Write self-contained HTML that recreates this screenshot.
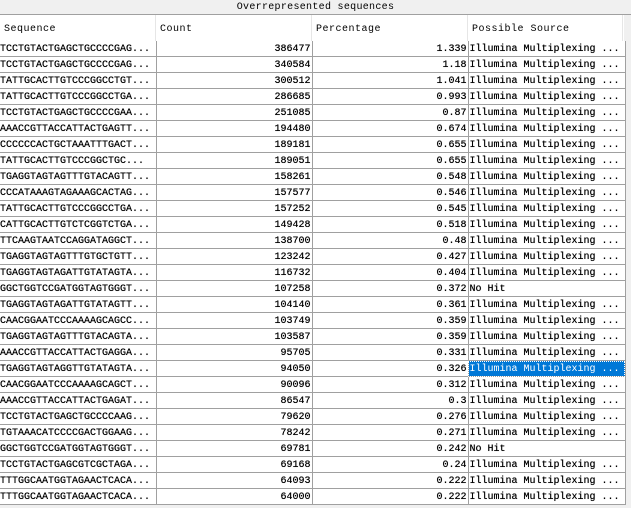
<!DOCTYPE html><html><head><style>
body{margin:0;width:631px;height:508px;background:#f0f0f0;overflow:hidden;font-family:"Liberation Mono","Noto Sans CJK SC",monospace;font-size:10px;color:#000;position:relative}
.t{position:absolute;top:1px;left:0;width:631px;height:14px;text-align:center;line-height:14px;letter-spacing:0.3px}
.tl{position:absolute;top:14px;left:0;width:631px;height:1px;background:#a0a0a0}
.hd{position:absolute;top:15px;left:0;width:624px;height:26px;background:#fff}
.hc{position:absolute;top:15px;height:26px;line-height:30px;padding-left:4px;box-sizing:border-box;border-right:1px solid #e6e6e6;letter-spacing:0.5px}
table{position:absolute;top:41px;left:0;border-collapse:collapse;background:#fff;table-layout:fixed;width:625px}
td{height:13px;padding:2px 1px 0 0;border-right:1px solid #a0a0a0;border-bottom:1px solid #a0a0a0;line-height:13px;white-space:nowrap;overflow:hidden;text-shadow:0 0 0.4px #000}
td.r{text-align:right}
td.s{padding-left:1px}
tr.sel td.p{background:#0078d7;color:#fff;outline:1px dotted #fff;outline-offset:-1px;text-shadow:none}
</style></head><body>
<div class="t">Overrepresented sequences</div><div class="tl"></div>
<div class="hd"></div>
<div class="hc" style="left:0;width:156px">Sequence</div>
<div class="hc" style="left:156px;width:156px">Count</div>
<div class="hc" style="left:312px;width:156px">Percentage</div>
<div class="hc" style="left:468px;width:155px">Possible Source</div>
<table>
<colgroup><col style="width:156px"><col style="width:156px"><col style="width:156px"><col style="width:157px"></colgroup>
<tr><td>TCCTGTACTGAGCTGCCCCGAG...</td><td class="r">386477</td><td class="r">1.339</td><td class="s">Illumina Multiplexing ...</td></tr>
<tr><td>TCCTGTACTGAGCTGCCCCGAG...</td><td class="r">340584</td><td class="r">1.18</td><td class="s">Illumina Multiplexing ...</td></tr>
<tr><td>TATTGCACTTGTCCCGGCCTGT...</td><td class="r">300512</td><td class="r">1.041</td><td class="s">Illumina Multiplexing ...</td></tr>
<tr><td>TATTGCACTTGTCCCGGCCTGA...</td><td class="r">286685</td><td class="r">0.993</td><td class="s">Illumina Multiplexing ...</td></tr>
<tr><td>TCCTGTACTGAGCTGCCCCGAA...</td><td class="r">251085</td><td class="r">0.87</td><td class="s">Illumina Multiplexing ...</td></tr>
<tr><td>AAACCGTTACCATTACTGAGTT...</td><td class="r">194480</td><td class="r">0.674</td><td class="s">Illumina Multiplexing ...</td></tr>
<tr><td>CCCCCCACTGCTAAATTTGACT...</td><td class="r">189181</td><td class="r">0.655</td><td class="s">Illumina Multiplexing ...</td></tr>
<tr><td>TATTGCACTTGTCCCGGCTGC...</td><td class="r">189051</td><td class="r">0.655</td><td class="s">Illumina Multiplexing ...</td></tr>
<tr><td>TGAGGTAGTAGTTTGTACAGTT...</td><td class="r">158261</td><td class="r">0.548</td><td class="s">Illumina Multiplexing ...</td></tr>
<tr><td>CCCATAAAGTAGAAAGCACTAG...</td><td class="r">157577</td><td class="r">0.546</td><td class="s">Illumina Multiplexing ...</td></tr>
<tr><td>TATTGCACTTGTCCCGGCCTGA...</td><td class="r">157252</td><td class="r">0.545</td><td class="s">Illumina Multiplexing ...</td></tr>
<tr><td>CATTGCACTTGTCTCGGTCTGA...</td><td class="r">149428</td><td class="r">0.518</td><td class="s">Illumina Multiplexing ...</td></tr>
<tr><td>TTCAAGTAATCCAGGATAGGCT...</td><td class="r">138700</td><td class="r">0.48</td><td class="s">Illumina Multiplexing ...</td></tr>
<tr><td>TGAGGTAGTAGTTTGTGCTGTT...</td><td class="r">123242</td><td class="r">0.427</td><td class="s">Illumina Multiplexing ...</td></tr>
<tr><td>TGAGGTAGTAGATTGTATAGTA...</td><td class="r">116732</td><td class="r">0.404</td><td class="s">Illumina Multiplexing ...</td></tr>
<tr><td>GGCTGGTCCGATGGTAGTGGGT...</td><td class="r">107258</td><td class="r">0.372</td><td class="s">No Hit</td></tr>
<tr><td>TGAGGTAGTAGATTGTATAGTT...</td><td class="r">104140</td><td class="r">0.361</td><td class="s">Illumina Multiplexing ...</td></tr>
<tr><td>CAACGGAATCCCAAAAGCAGCC...</td><td class="r">103749</td><td class="r">0.359</td><td class="s">Illumina Multiplexing ...</td></tr>
<tr><td>TGAGGTAGTAGTTTGTACAGTA...</td><td class="r">103587</td><td class="r">0.359</td><td class="s">Illumina Multiplexing ...</td></tr>
<tr><td>AAACCGTTACCATTACTGAGGA...</td><td class="r">95705</td><td class="r">0.331</td><td class="s">Illumina Multiplexing ...</td></tr>
<tr class="sel"><td>TGAGGTAGTAGGTTGTATAGTA...</td><td class="r">94050</td><td class="r">0.326</td><td class="s p">Illumina Multiplexing ...</td></tr>
<tr><td>CAACGGAATCCCAAAAGCAGCT...</td><td class="r">90096</td><td class="r">0.312</td><td class="s">Illumina Multiplexing ...</td></tr>
<tr><td>AAACCGTTACCATTACTGAGAT...</td><td class="r">86547</td><td class="r">0.3</td><td class="s">Illumina Multiplexing ...</td></tr>
<tr><td>TCCTGTACTGAGCTGCCCCAAG...</td><td class="r">79620</td><td class="r">0.276</td><td class="s">Illumina Multiplexing ...</td></tr>
<tr><td>TGTAAACATCCCCGACTGGAAG...</td><td class="r">78242</td><td class="r">0.271</td><td class="s">Illumina Multiplexing ...</td></tr>
<tr><td>GGCTGGTCCGATGGTAGTGGGT...</td><td class="r">69781</td><td class="r">0.242</td><td class="s">No Hit</td></tr>
<tr><td>TCCTGTACTGAGCGTCGCTAGA...</td><td class="r">69168</td><td class="r">0.24</td><td class="s">Illumina Multiplexing ...</td></tr>
<tr><td>TTTGGCAATGGTAGAACTCACA...</td><td class="r">64093</td><td class="r">0.222</td><td class="s">Illumina Multiplexing ...</td></tr>
<tr><td>TTTGGCAATGGTAGAACTCACA...</td><td class="r">64000</td><td class="r">0.222</td><td class="s">Illumina Multiplexing ...</td></tr>
</table>
</body></html>
